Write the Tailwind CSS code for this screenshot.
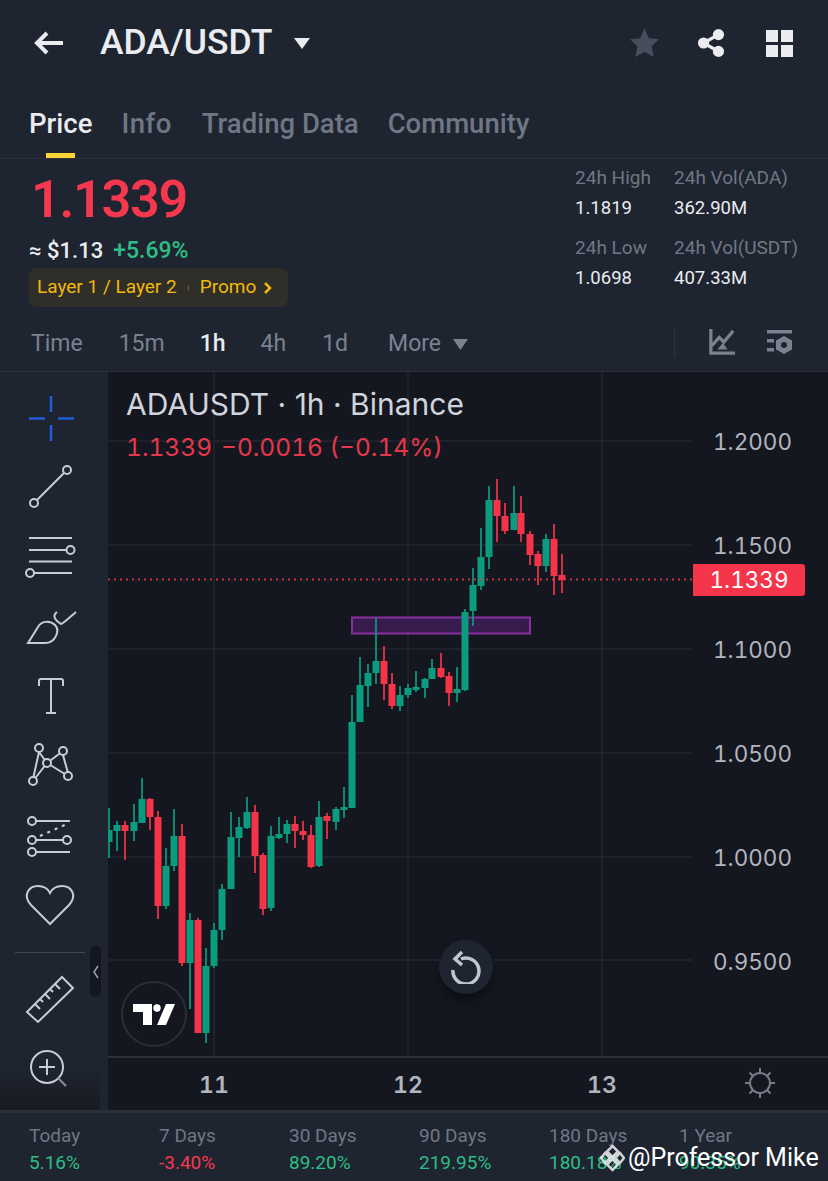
<!DOCTYPE html>
<html lang="en">
  <head>
    <meta charset="UTF-8" />
    <title>ADA/USDT</title>
    <script src="https://cdn.jsdelivr.net/npm/@tailwindcss/browser@4"></script>
  </head>

  <body class="bg-[#1f2530]">
    <div class="relative w-[828px] h-[1181px] overflow-hidden flex flex-col bg-[#1f2530] font-['Roboto',sans-serif] text-[#eaecef]">

      <!-- header -->
      <header class="h-[86px] shrink-0 flex items-center pl-[34px] pr-[35px]">
        <svg class="w-[30px] h-[24px]" viewBox="0 0 30 24" fill="none" stroke="#eaecef" stroke-width="4"><path d="M29 12H3M13 2L3 12l10 10" /></svg>
        <h1 class="ml-[36px] text-[35.500px] font-medium leading-none">ADA/USDT</h1>
        <svg class="ml-[22px] w-[16px] h-[11px]" viewBox="0 0 16 11" fill="#eaecef"><path d="M0 0h16L8 11z" /></svg>
        <div class="ml-auto flex items-center">
          <svg class="w-[29px] h-[30px]" viewBox="0 0 30 30" fill="#474d5b"><path d="M15 0l4.600 10 10.400 1.200-7.600 7.200 2 11.100L15 24l-9.400 5.500 2-11.100L0 11.200 10.400 10z" /></svg>
          <svg class="ml-[38px] w-[28px] h-[30px]" viewBox="0 0 30 30" fill="#eaecef"><circle cx="23" cy="6" r="6" /><circle cx="7" cy="15" r="6" /><circle cx="23" cy="24" r="6" /><path d="M7 15L23 6M7 15l16 9" stroke="#eaecef" stroke-width="3.500" /></svg>
          <div class="ml-[41px] grid grid-cols-2 gap-[3px] w-[27px]">
            <div class="h-[12px] bg-[#eaecef]"></div>
            <div class="h-[12px] bg-[#eaecef]"></div>
            <div class="h-[12px] bg-[#eaecef]"></div>
            <div class="h-[12px] bg-[#eaecef]"></div>
          </div>
        </div>
      </header>

      <!-- tabs -->
      <nav class="h-[73px] shrink-0 flex gap-[29px] pl-[29px] pt-[21px] border-b border-[#2b303a] text-[27.500px] leading-[34px] font-medium text-[#6f7785]">
        <a class="relative text-[#eaecef] h-[51px]">Price<span class="absolute left-[17px] bottom-0 w-[29px] h-[5px] bg-[#fcd535]"></span></a>
        <a class="tracking-[0.500px]">Info</a>
        <a class="ml-[1px]">Trading Data</a>
        <a>Community</a>
      </nav>

      <!-- price summary -->
      <section class="h-[163px] shrink-0 flex justify-between pl-[29px] pr-[30px]">
        <div>
          <div class="pl-[2px] pt-[13px] text-[52px] leading-[56px] font-semibold tracking-[-1.200px] text-[#f6384f]">1.1339</div>
          <div class="flex items-baseline gap-[10px] mt-[10px] text-[22px] leading-[26px] font-medium">
            <span>≈ $1.13</span><span class="text-[23px] text-[#2ebd85]">+5.69%</span>
          </div>
          <div class="mt-[4px] w-[259px] h-[39px] rounded-[8px] bg-[#302e28] flex items-center pl-[8px] text-[19px] text-[#f0b90b]">
            <span>Layer 1 / Layer 2</span>
            <span class="ml-[11px] w-[1px] h-[6px] bg-[#6b5a2a]"></span>
            <span class="ml-[11px]">Promo</span>
            <svg class="ml-[7px] w-[9px] h-[12px]" viewBox="0 0 9 12" fill="none" stroke="#f0b90b" stroke-width="2.500"><path d="M2 1l5 5-5 5" /></svg>
          </div>
        </div>
        <div class="grid grid-cols-[99px_auto] auto-rows-[31px] pt-[3px] text-[18.500px] leading-[31px] h-fit">
          <span class="text-[19px] text-[#6f7785]">24h High</span><span class="text-[19px] text-[#6f7785]">24h Vol(ADA)</span>
          <span>1.1819</span><span>362.90M</span>
          <span class="text-[19px] text-[#6f7785] mt-[8px]">24h Low</span><span class="text-[19px] text-[#6f7785] mt-[8px]">24h Vol(USDT)</span>
          <span class="mt-[8px]">1.0698</span><span class="mt-[8px]">407.33M</span>
        </div>
      </section>

      <!-- intervals -->
      <div class="h-[50px] shrink-0 flex items-center pl-[31px] pr-[35px] pb-[5px] text-[23px] text-[#7a8290] border-b border-[#2b303a]">
        <span>Time</span>
        <span class="ml-[36px]">15m</span>
        <span class="ml-[35px] font-medium text-[#eaecef]">1h</span>
        <span class="ml-[35px]">4h</span>
        <span class="ml-[36px]">1d</span>
        <span class="ml-[40px]">More</span>
        <svg class="ml-[12px] w-[15px] h-[11px]" viewBox="0 0 15 11" fill="#7a8290"><path d="M0 0h15L7.500 11z" /></svg>
        <span class="ml-auto -mt-[4px] w-[1px] h-[30px] bg-[#2f343f]"></span>
        <svg class="ml-[33px] -mt-[4px] w-[28px] h-[26px]" viewBox="0 0 28 28" fill="none" stroke="#7a8290" stroke-width="3.500"><path d="M2 0v26h26M3 18l8-9 5 5 10-12" /><path d="M9 22h11l-5-7z" fill="#7a8290" stroke="none" /></svg>
        <svg class="ml-[31px] -mt-[4px] w-[26px] h-[26px]" viewBox="0 0 26 26" fill="#7a8290"><rect width="25" height="3.500" y="1" /><rect y="10" width="7" height="3.500" /><rect y="19" width="7" height="3.500" /><path fill-rule="evenodd" d="M17 7l8 4.500v9L17 25l-8-4.500v-9zM17 13a3 3 0 100 6 3 3 0 000-6z" /></svg>
      </div>

      <!-- chart area -->
      <main class="h-[738px] shrink-0 flex">
        <aside class="relative w-[108px] shrink-0 pt-[12px]">
          <div class="absolute left-0 right-[8px] bottom-0 h-[46px] bg-gradient-to-b from-[#1f2530] to-[#171b23]"></div>
          <svg class="relative block w-[108px] h-[69px]" viewBox="0 384 108 69" fill="none" stroke="#1f5fdc" stroke-width="2.500"><path d="M51 396v16M51 425v16M29 418.500h16M58 418.500h16" /></svg>
          <svg class="relative block w-[108px] h-[69px]" viewBox="0 453 108 69" fill="none" stroke="#c9ccd3" stroke-width="2"><circle cx="67" cy="470" r="4" /><circle cx="34" cy="503" r="4" /><path d="M37 500l27-27" /></svg>
          <svg class="relative block w-[108px] h-[69px]" viewBox="0 522 108 69" fill="none" stroke="#c9ccd3" stroke-width="2"><path d="M29 538h43M29 550h37M29 561.500h43M34 573h38" /><circle cx="70.500" cy="550" r="4" /><circle cx="30" cy="573" r="4" /></svg>
          <svg class="relative block w-[108px] h-[69px]" viewBox="0 591 108 69" fill="none" stroke="#c9ccd3" stroke-width="2"><path d="M28 643L38 627C41 621 50 620 55 625C60 630 56 643 45 643Z" /><path d="M57 612C53 615 54 618 57 621L61 624C63 624 70 617 76 612" /></svg>
          <svg class="relative block w-[108px] h-[69px]" viewBox="0 660 108 69" fill="none" stroke="#c9ccd3" stroke-width="2"><path d="M39 686v-5q0-2 2-2h20q2 0 2 2v5M51 679v34M46 713h10" /></svg>
          <svg class="relative block w-[108px] h-[69px]" viewBox="0 729 108 69" fill="none" stroke="#c9ccd3" stroke-width="2"><path d="M39 752l8 11M39 752l-6 27M47 763l16-12M63 755l5 18M47 763l21 13M47 763l-14 18" /><g fill="#1f2530"><circle cx="39" cy="748" r="4" /><circle cx="63" cy="751" r="4" /><circle cx="47" cy="763" r="4" /><circle cx="68" cy="776" r="4" /><circle cx="33" cy="781" r="4" /></g></svg>
          <svg class="relative block w-[108px] h-[69px]" viewBox="0 798 108 69" fill="none" stroke="#c9ccd3" stroke-width="2"><circle cx="32" cy="821" r="4" /><circle cx="32" cy="840" r="4" /><circle cx="67" cy="840" r="4" /><circle cx="32" cy="852" r="4" /><path d="M36 821h34M36 840h27M36 852h34" /><path d="M40 836l27-12" stroke-dasharray="3 5" /></svg>
          <svg class="relative block w-[108px] h-[69px]" viewBox="0 867 108 69" fill="none" stroke="#c9ccd3" stroke-width="2"><path d="M50 924L31 905C22 895 29 886 38 886C44 886 48 889 50 893C52 889 56 886 62 886C71 886 78 895 69 905Z" /></svg>
          <div class="mt-[16px] ml-[15px] w-[70px] h-[1px] bg-[#434853]"></div>
          <svg class="relative block mt-[12px] w-[108px] h-[69px]" viewBox="0 965 108 69" fill="none" stroke="#c9ccd3" stroke-width="2"><path d="M62 977l11 11-35 34-11-10zM55 984l5 5M50 989l3 3M45 994l5 5M40 999l3 3M35 1004l5 5" /></svg>
          <svg class="relative block w-[108px] h-[69px]" viewBox="0 1034 108 69" fill="none" stroke="#c9ccd3" stroke-width="2"><circle cx="47" cy="1067" r="16" /><path d="M47 1059v16M39 1067h16" /><path d="M58 1078l8 8" stroke="#8b8f98" /></svg>
          <div class="absolute left-[90px] top-[574px] w-[11px] h-[51px] rounded-[5px] bg-[#14171f] flex items-center justify-center">
            <svg class="w-[6px] h-[14px]" viewBox="0 0 6 14" fill="none" stroke="#9ba0aa" stroke-width="1.500"><path d="M5 1L1 7l4 6" /></svg>
          </div>
        </aside>

        <div class="relative flex-1 bg-[#14171f]">
          <svg id="chart" class="absolute left-0 top-0 w-[720px] h-[684px]" viewBox="108 372 720 684">
            <g stroke="#23272f" stroke-width="1.500">
              <path d="M214 372V1056M408 372V1056M602 372V1056" />
              <path d="M108 441H692M108 545H692M108 649H692M108 753H692M108 857H692M108 960H692" />
            </g>
            <rect x="352" y="617.500" width="178" height="16" fill="#371b4c" stroke="#8a2fa3" stroke-width="2" />
            <path d="M358 625.500H524" stroke="#7a4a8c" stroke-width="3" stroke-dasharray="1 7" opacity="0.200" />
            <g id="candles"></g>
            <path d="M108 579.500H692" stroke="#f5364a" stroke-width="2" stroke-dasharray="2 4" opacity="0.800" />
          </svg>

          <div class="absolute left-[18px] top-[14px] text-[30px] leading-[36px] text-[#d1d4dc] font-['Inter',sans-serif]">ADAUSDT · 1h · Binance</div>
          <div class="absolute left-[18px] top-[60px] flex gap-[9px] text-[24.500px] leading-[30px] tabular-nums text-[#e5384c] font-['Inter',sans-serif]">
            <span>1.1339</span><span>−0.0016 (−0.14%)</span>
          </div>

          <!-- price scale -->
          <div class="absolute left-[584px] top-[18px] w-[136px] font-['Inter',sans-serif] text-[22.500px] leading-[104px] tabular-nums text-[#b2b5be] pl-[21px]">
            <div>1.2000</div>
            <div>1.1500</div>
            <div>1.1000</div>
            <div>1.0500</div>
            <div>1.0000</div>
            <div>0.9500</div>
          </div>
          <div class="absolute left-[585px] top-[192px] w-[112px] h-[32px] rounded-r-[3px] bg-[#f5364a] text-white text-[22.500px] leading-[32px] text-center tabular-nums font-['Inter',sans-serif]">1.1339</div>

          <!-- tradingview mark -->
          <div class="absolute left-[13px] top-[609px] w-[66px] h-[66px] rounded-full border-2 border-[#2a2e39] bg-[#14171f] flex items-center justify-center">
            <svg class="w-[42px] h-[21px]" viewBox="0 0 42 21" fill="#ffffff"><path d="M0 0h19v21h-9V8H0zM33 0h9l-9 21h-9z" /><circle cx="24" cy="4" r="3.700" /></svg>
          </div>

          <!-- reset -->
          <div class="absolute left-[331px] top-[568px] w-[54px] h-[54px] rounded-full bg-[#1f2530] shadow-lg shadow-black/40 flex items-center justify-center">
            <svg class="w-[34px] h-[34px]" viewBox="0 0 34 34" fill="none" stroke="#c2c5cd" stroke-width="3.500"><path d="M12 9a13 13 0 11-8 11" /><path d="M13 2L6 9l7 6" /></svg>
          </div>

          <!-- time scale -->
          <div class="absolute left-0 right-0 top-[684px] h-[54px] border-t-2 border-[#2c303a] font-['Inter',sans-serif] text-[23px] font-semibold tabular-nums text-[#b2b5be]">
            <span class="absolute left-[106px] top-[10px] -translate-x-1/2">11</span>
            <span class="absolute left-[300px] top-[10px] -translate-x-1/2">12</span>
            <span class="absolute left-[494px] top-[10px] -translate-x-1/2">13</span>
            <svg class="absolute left-[637px] top-[10px] w-[30px] h-[30px]" viewBox="0 0 30 30" fill="none" stroke="#787b86" stroke-width="2"><circle cx="15" cy="15" r="10" /><path d="M15 0v5M15 25v5M0 15h5M25 15h5M4.500 4.500l3.500 3.500M22 22l3.500 3.500M25.500 4.500L22 8M8 22l-3.500 3.500" /></svg>
          </div>
        </div>
      </main>

      <!-- period returns -->
      <footer class="flex-1 border-t-[3px] border-[#2c303a] grid grid-cols-[130px_130px_130px_130px_130px_1fr] pl-[29px] pt-[9px] text-[19px] leading-[27px] text-[#2ebd85]">
        <div><div class="text-[#6f7785]">Today</div><div>5.16%</div></div>
        <div><div class="text-[#6f7785]">7 Days</div><div class="text-[#f6384f]">-3.40%</div></div>
        <div><div class="text-[#6f7785]">30 Days</div><div>89.20%</div></div>
        <div><div class="text-[#6f7785]">90 Days</div><div>219.95%</div></div>
        <div><div class="text-[#6f7785]">180 Days</div><div>180.18%</div></div>
        <div><div class="text-[#6f7785]">1 Year</div><div>90.35%</div></div>
      </footer>

      <!-- watermark -->
      <div class="absolute left-[600px] top-[1143px] flex items-center gap-[3px] text-white text-[25px] leading-[30px]">
        <svg class="w-[25px] h-[28px] opacity-80" viewBox="0 0 25 28" fill="none" stroke="#ffffff" stroke-width="2.500"><path d="M12.500 2l5.500 5.500-5.500 5.500L7 7.500zM12.500 15l5.500 5.500-5.500 5.500L7 20.500zM5 9l5 5-5 5-4-5zM20 9l4 5-4 5-5-5z" /></svg>
        <span>@Professor Mike</span>
      </div>
    </div>

    <script>
      // [x, up, wickTop, wickBottom, bodyTop, bodyBottom], page coordinates
      const candles = [
        [109,1,808,858,830,842],[117,1,821,851,825,831],[125,0,821,860,825,831],[134,1,804,841,822,831],
        [142,1,778,823,799,823],[150,0,798,830,799,817],[158,0,811,919,817,906],[166,1,848,909,866,906],
        [174,1,809,871,836,866],[182,0,824,966,836,963],[190,1,913,1009,920,963],[198,0,918,1033,920,1033],
        [206,1,948,1043,966,1033],[214,1,923,968,930,966],[222,1,884,940,889,930],[231,1,812,889,837,889],
        [239,1,817,857,827,838],[247,1,797,829,812,828],[255,0,805,873,812,856],[263,0,853,915,855,909],
        [271,1,826,911,836,908],[279,1,817,839,834,838],[287,1,820,843,824,834],[295,0,816,848,824,831],
        [303,0,821,840,831,835],[311,0,825,868,835,867],[319,1,801,867,817,866],[327,0,813,839,816,821],
        [336,1,807,830,809,822],[344,1,787,818,807,810],[352,1,695,808,722,808],[360,1,657,722,685,722],
        [368,1,664,707,673,686],[376,1,618,684,661,673],[384,0,646,700,661,684],[392,0,673,709,684,706],
        [400,1,686,711,695,706],[408,1,684,698,688,695],[416,1,671,692,687,690],[425,1,678,698,679,688],
        [432,1,659,679,668,679],[441,0,653,678,668,677],[449,0,672,706,676,693],[457,1,667,702,689,693],
        [465,1,609,691,612,690],[473,1,568,626,585,611],[481,1,528,590,557,586],[489,1,486,569,500,557],
        [497,0,479,542,500,516],[505,0,503,534,516,531],[514,1,486,530,513,530],[521,0,496,542,513,534],
        [530,0,531,565,534,555],[538,0,551,585,554,566],[546,1,534,572,539,566],[554,0,524,595,539,576],
        [562,0,554,593,575,580],
      ];
      const group = document.getElementById('candles');
      let out = '';
      for (const [x, up, wt, wb, bt, bb] of candles) {
        const color = up ? '#0b9b7f' : '#f5344a';
        out += `<rect x="${x - 1}" y="${wt}" width="2" height="${wb - wt}" fill="${color}" opacity="0.850" />`;
        out += `<rect x="${x - 3.5}" y="${bt}" width="7" height="${bb - bt}" fill="${color}" />`;
      }
      group.innerHTML = out;
    </script>
  </body>
</html>
